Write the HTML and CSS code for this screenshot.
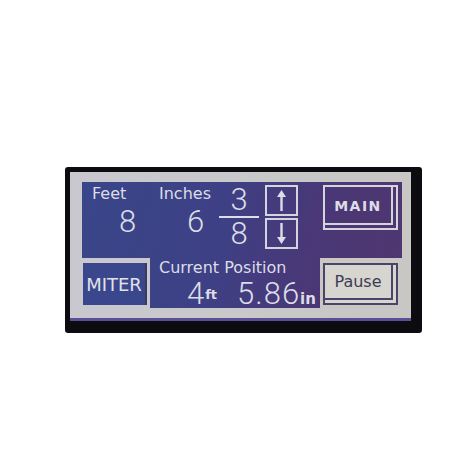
FILE: index.html
```html
<!DOCTYPE html>
<html lang="en">
<head>
<meta charset="utf-8">
<title>Saw Controller</title>
<link rel="stylesheet" href="styles.css">
</head>
<body>
<div class="bezel">
  <div class="frame">
    <div class="screen">
      <div class="cell feet">
        <div class="label">Feet</div>
        <div class="digits feet-value">8</div>
      </div>

      <div class="cell inches">
        <div class="inches-main">
          <div class="label">Inches</div>
          <div class="digits inches-value">6</div>
        </div>
        <div class="fraction">
          <div class="digits">3</div>
          <div class="fraction-bar"></div>
          <div class="digits">8</div>
        </div>
      </div>

      <div class="cell arrows">
        <div class="arrow-btn">
          <svg width="29" height="27" viewBox="0 0 29 27">
            <line x1="14.5" y1="8" x2="14.5" y2="24" stroke="#dcdde6" stroke-width="2.4"/>
            <polygon points="10,10 14.5,3 19,10" fill="#dcdde6"/>
          </svg>
        </div>
        <div class="arrow-btn">
          <svg width="29" height="27" viewBox="0 0 29 27">
            <line x1="14.5" y1="3" x2="14.5" y2="19" stroke="#dcdde6" stroke-width="2.4"/>
            <polygon points="10,17 14.5,24 19,17" fill="#dcdde6"/>
          </svg>
        </div>
      </div>

      <div class="cell main-cell">
        <div class="main-btn">
          <div class="main-face">MAIN</div>
        </div>
      </div>

      <div class="cell miter-cell">
        <div class="miter-btn">MITER</div>
      </div>

      <div class="cell position">
        <div class="label">Current Position</div>
        <div class="readout">
          <span class="digits">4</span><span class="unit-ft">ft</span>
          <span class="digits decimal">5.86</span><span class="unit-in">in</span>
        </div>
      </div>

      <div class="cell pause-cell">
        <div class="pause-btn">
          <div class="pause-face">Pause</div>
        </div>
      </div>
    </div>
  </div>
</div>
</body>
</html>
```

FILE: styles.css
```css
html, body {
  margin: 0;
  padding: 0;
  background: #ffffff;
}

.bezel {
  margin: 167px 0 0 65px;
  width: 357px;
  height: 166px;
  box-sizing: border-box;
  padding: 5px 11px 12px 5px;
  background: #0c0c10;
  border-radius: 3px;
}

.frame {
  width: 341px;
  height: 149px;
  box-sizing: border-box;
  padding: 10px 9px 13px 12px;
  background: linear-gradient(90deg, #c9c8cf, #c8c7c4);
  border-bottom: 3px solid #5a4f98;
}

.screen {
  display: grid;
  grid-template-columns: 68px 112px 58px 82px;
  grid-template-rows: 76px 50px;
  background: linear-gradient(100deg, #394689 0%, #3e4085 42%, #4a3776 72%, #4f366f 100%);
  color: #dcdde6;
  font-family: "DejaVu Sans", sans-serif;
}

.cell {
  box-sizing: border-box;
}

.label {
  font-size: 16px;
  line-height: 16px;
  white-space: nowrap;
}

.digits {
  font-family: Roboto, "Liberation Sans", sans-serif;
  font-weight: 300;
  font-size: 31px;
  line-height: 32px;
}

/* Feet */
.feet {
  padding: 4px 0 0 10px;
}
.feet-value {
  margin-top: 4px;
  padding-left: 27px;
}

/* Inches with fraction */
.inches {
  display: flex;
  padding: 4px 0 0 9px;
}
.inches-main {
  width: 60px;
}
.inches-value {
  margin-top: 4px;
  padding-left: 28px;
}
.fraction {
  width: 40px;
  margin-top: -2px;
  text-align: center;
}
.fraction-bar {
  height: 2px;
  background: #dcdde6;
}

/* Up / down arrows */
.arrows {
  display: flex;
  flex-direction: column;
  gap: 2px;
  padding: 3px 0 0 3px;
}
.arrow-btn {
  width: 33px;
  height: 31px;
  box-sizing: border-box;
  border: 2px solid #d4d4dc;
}
.arrow-btn svg {
  display: block;
}

/* MAIN button */
.main-cell {
  padding: 3px 0 0 3px;
}
.main-btn {
  width: 75px;
  height: 45px;
  box-sizing: border-box;
  border: 2px solid #d4d4dc;
  display: flex;
}
.main-face {
  flex: 1;
  margin: 0 3px 3px 0;
  border-right: 2px solid #d4d4dc;
  border-bottom: 2px solid #d4d4dc;
  display: flex;
  align-items: center;
  justify-content: center;
  font-size: 14px;
  font-weight: bold;
  letter-spacing: 1.5px;
  padding-top: 2px;
}

/* MITER button */
.miter-cell {
  background: #c9c8cf;
  padding: 5px 0 0 1px;
}
.miter-btn {
  width: 64px;
  height: 42px;
  box-sizing: border-box;
  background: #3b478c;
  border-right: 2px solid #3a3a5c;
  display: flex;
  align-items: center;
  justify-content: center;
  font-size: 18px;
  color: #e2e2ea;
}

/* Current position readout */
.position {
  grid-column: 2 / 4;
  padding: 2px 0 0 9px;
}
.readout {
  display: flex;
  align-items: baseline;
  padding-left: 28px;
  margin-top: 2px;
}
.unit-ft {
  font-size: 13px;
  font-weight: bold;
  position: relative;
  top: -5px;
  margin-left: 1px;
  margin-right: 20px;
}
.decimal {
  letter-spacing: 1px;
}
.unit-in {
  font-size: 15px;
  font-weight: bold;
}

/* Pause button */
.pause-cell {
  background: #c8c7c4;
  padding: 5px 0 0 3px;
}
.pause-btn {
  width: 75px;
  height: 42px;
  box-sizing: border-box;
  border: 2px solid #4a4468;
  background: #d6d5d0;
  display: flex;
}
.pause-face {
  flex: 1;
  margin: 0 3px 3px 0;
  border-right: 2px solid #4a4468;
  border-bottom: 2px solid #4a4468;
  display: flex;
  align-items: center;
  justify-content: center;
  font-size: 16px;
  color: #3c3c52;
}
```
